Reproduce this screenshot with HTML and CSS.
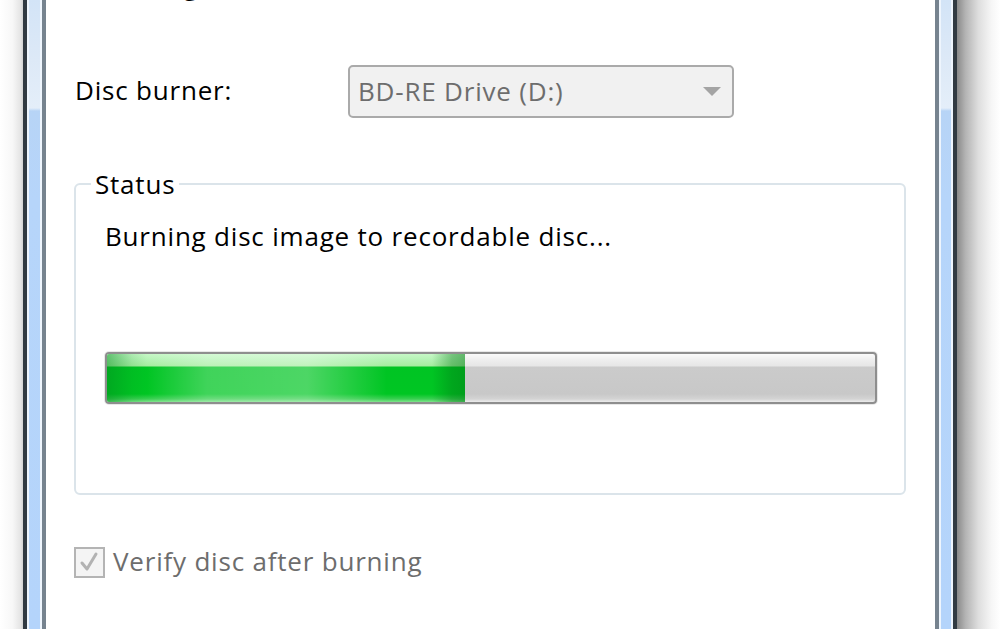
FILE: index.html
```html
<!DOCTYPE html>
<html lang="en">
<head>
<meta charset="utf-8">
<title>Burn Disc Image</title>
<link rel="stylesheet" href="styles.css">
</head>
<body>
<div class="shadow-left"></div>
<div class="frame frame-left"><div class="frame-glass"></div></div>
<main class="content">
  <div class="title">Disc image file:</div>
  <div class="burner-row">
    <div class="label">Disc burner:</div>
    <div class="combo">
      <span class="combo-text">BD-RE Drive (D:)</span>
      <svg class="combo-arrow" width="18" height="10" viewBox="0 0 18 10"><path d="M0 0 H18 L9 9 Z" fill="#a4a4a4"/></svg>
    </div>
  </div>
  <fieldset class="group">
    <legend class="legend">Status</legend>
    <div class="group-body">
      <div class="status-text">Burning disc image to recordable disc...</div>
      <div class="progress">
        <div class="progress-fill" style="width: 46.6%"></div>
      </div>
    </div>
  </fieldset>
  <div class="check-row">
    <span class="checkbox">
      <svg width="27" height="27" viewBox="0 0 27 27"><path d="M6 14 L11 20 L20 5" fill="none" stroke="#b2b2b2" stroke-width="3" stroke-linejoin="round" stroke-linecap="round"/></svg>
    </span>
    <span class="check-label">Verify disc after burning</span>
  </div>
</main>
<div class="frame frame-right"><div class="frame-glass"></div></div>
<div class="shadow-right"></div>
</body>
</html>
```
FILE: styles.css
```css
html, body {
  margin: 0;
  padding: 0;
}
body {
  width: 1000px;
  height: 629px;
  overflow: hidden;
  display: flex;
  background: #ffffff;
  font-family: "Open Sans", "Noto Sans", "DejaVu Sans", sans-serif;
  font-size: 26px;
  letter-spacing: 0.8px;
  color: #000;
}
.shadow-left {
  width: 23px;
  flex: none;
  background: linear-gradient(to right, #ffffff 0%, #f7f7f7 55%, #e4e4e4 90%, #d2d2d2 100%);
}
.shadow-right {
  width: 43px;
  flex: none;
  background: linear-gradient(to right, #8a8a8a 0%, #b4b4b4 20%, #dedede 50%, #f6f6f6 80%, #ffffff 100%);
}
.frame {
  width: 23px;
  flex: none;
  box-sizing: border-box;
  padding: 0 2px;
  background: #eef5fd;
}
.frame-left {
  border-left: 4px solid #313a42;
  border-right: 4px solid #76838f;
}
.frame-right {
  width: 22px;
  border-left: 4px solid #76838f;
  border-right: 4px solid #313a42;
}
.frame-glass {
  height: 100%;
  background: linear-gradient(to bottom, #d3e4f7 0px, #dde9f7 60px, #e4eef9 108px, #b7d4f6 111px, #b6d5fa 200px, #b4d4fb 629px);
}
.content {
  flex: 1;
  padding: 0 29px 0 29px;
  display: flex;
  flex-direction: column;
  align-items: stretch;
}
.title {
  line-height: 30px;
  margin-top: -30px;
}
.burner-row {
  display: flex;
  align-items: center;
  margin-top: 65px;
}
.label {
  width: 273px;
  flex: none;
  line-height: 30px;
  padding-bottom: 4px;
}
.combo {
  width: 386px;
  height: 53px;
  box-sizing: border-box;
  border: 2px solid #aaaaaa;
  border-radius: 5px;
  background: #f1f1f1;
  display: flex;
  align-items: center;
  justify-content: space-between;
  padding: 0 11px 2px 8px;
}
.combo-text {
  color: #6d6d6d;
  line-height: 30px;
}
.combo-arrow {
  display: block;
  margin-top: 2px;
}
.group {
  margin: 51px 0 0 0;
  margin-left: -1px;
  padding: 0;
  border: 2px solid #dbe4ea;
  border-radius: 6px;
  min-width: 0;
}
.legend {
  margin-left: 15px;
  padding: 0 4px;
  line-height: 30px;
}
.group-body {
  padding: 22px 27px 89px 29px;
}
.status-text {
  line-height: 30px;
}
.progress {
  margin-top: 101px;
  height: 52px;
  box-sizing: border-box;
  border: 2px solid #8e8e8e;
  border-radius: 4px;
  background:
    linear-gradient(to bottom, #fafafa 0px, #eeeeee 6px, #e6e6e6 12px, #cbcbcb 13px, #c8c8c8 40px, #d4d4d4 45px, #ececec 48px);
  overflow: hidden;
  display: flex;
  box-shadow: 0 0 0 1px #e8e8e8;
}
.progress-fill {
  height: 100%;
  background:
    linear-gradient(to right, rgba(0,140,30,0.5) 0px, rgba(0,140,30,0.12) 25px, rgba(255,255,255,0) 40px, rgba(255,255,255,0.25) 100px, rgba(255,255,255,0.3) 200px, rgba(255,255,255,0) 280px, rgba(0,0,0,0) 325px, rgba(0,120,20,0.4) 345px, rgba(0,120,20,0.5) 100%),
    linear-gradient(to bottom, #c6f7c6 0px, #b4f2b4 6px, #a6ec9f 12px, #00c423 13px, #00c623 40px, #3ad052 45px, #80e38c 48px);
}
.check-row {
  margin-top: 51px;
  display: flex;
  align-items: center;
  margin-left: -1px;
}
.checkbox {
  width: 31px;
  height: 31px;
  box-sizing: border-box;
  border: 2px solid #b4b4b4;
  background: #f4f4f4;
  display: flex;
  align-items: center;
  justify-content: center;
  flex: none;
}
.checkbox svg {
  display: block;
}
.check-label {
  margin-left: 8px;
  color: #6d6d6d;
  line-height: 30px;
  padding-bottom: 2px;
}
```
